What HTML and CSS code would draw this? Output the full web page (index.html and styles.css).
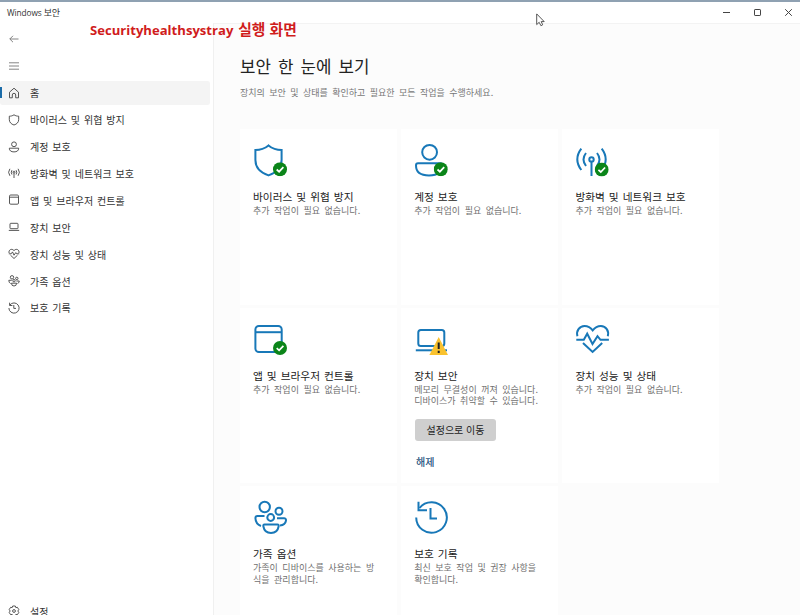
FILE: index.html
```
<!DOCTYPE html>
<html lang="ko">
<head>
    <meta charset="UTF-8">
    <meta name="viewport" content="width=device-width, initial-scale=1.0">
    <title>Windows 보안</title>
    <link rel="stylesheet" href="styles.css">
</head>
<body>
    <svg class="defs" width="0" height="0">
        <symbol id="check" viewBox="0 0 14 14">
            <circle cx="7" cy="7" r="7" fill="#0b8519" stroke="none"/>
            <path d="M3.7 7.2 L6.1 9.4 L10.4 4.9" fill="none" stroke="#fff" stroke-width="1.7"/>
        </symbol>
    </svg>
    <div class="window">
        <header class="titlebar">
            <span class="title">Windows <span class="title-ko">보안</span></span>
            <div class="controls">
                <svg width="9" height="9"><path d="M1 4.5H8"/></svg>
                <svg width="9" height="9"><rect x="1.5" y="1.5" width="6" height="6" rx="0.6"/></svg>
                <svg width="9" height="9"><path d="M1.2 1.2L7.8 7.8M7.8 1.2L1.2 7.8"/></svg>
            </div>
        </header>
        <div class="main">
            <nav class="sidebar">
                <a class="item"><svg class="dim" viewBox="0 0 12 12"><path d="M10.5 6H1.8M5 2.8L1.8 6L5 9.2"/></svg></a>
                <a class="item"><svg class="dim" viewBox="0 0 12 12"><path d="M1 2.8H11M1 6H11M1 9.2H11"/></svg></a>
                <a class="item active"><svg viewBox="0 0 12 12"><path d="M1.5 5.2L6 1.2L10.5 5.2V10.8H7.7V8A1.7 1.7 0 0 0 4.3 8V10.8H1.5Z"/></svg>홈</a>
                <a class="item"><svg viewBox="0 0 12 12"><path d="M6 .8C7.5 1.8 9 2.2 10.7 2.2V5.5C10.7 8.3 8.8 10.2 6 11C3.2 10.2 1.3 8.3 1.3 5.5V2.2C3 2.2 4.5 1.8 6 .8Z"/></svg>바이러스 및 위협 방지</a>
                <a class="item"><svg viewBox="0 0 12 12"><circle cx="6" cy="3.3" r="2.4"/><path d="M1.3 7.2H10.7C10.7 9.7 8.9 10.9 6 10.9S1.3 9.7 1.3 7.2Z"/></svg>계정 보호</a>
                <a class="item"><svg viewBox="0 0 12 12"><circle cx="6" cy="5.2" r="1"/><path d="M6 6.2V11M3.9 3.2Q2.6 5.3 3.9 7.5M8.1 3.2Q9.4 5.3 8.1 7.5M1.9 1.8Q-.7 5.3 1.9 8.8M10.1 1.8Q12.7 5.3 10.1 8.8"/></svg>방화벽 및 네트워크 보호</a>
                <a class="item"><svg viewBox="0 0 12 12"><rect x="1.5" y="1" width="9" height="9.2" rx="1.2"/><path d="M1.5 3.2H10.5"/></svg>앱 및 브라우저 컨트롤</a>
                <a class="item"><svg viewBox="0 0 12 12"><rect x="2" y="2.3" width="8" height="5.4" rx=".8"/><path d="M.8 9.4H11.2"/></svg>장치 보안</a>
                <a class="item"><svg viewBox="0 0 12 12"><path d="M1.1 5C.2 2 3.8-.2 6 2.7C8.2-.2 11.8 2 10.9 5M.8 5.8H3.2L4.5 3.9L6 7.2L7.8 4.6L8.8 5.8H11.2M2.5 7.2L6 10.5L9.5 7.2"/></svg>장치 성능 및 상태</a>
                <a class="item"><svg viewBox="0 0 12 12"><circle cx="4" cy="2.3" r="1.7"/><circle cx="8.8" cy="3.4" r="1.2"/><circle cx="6" cy="5.7" r="1.2"/><path d="M3.8 5.3H.8Q.7 7.7 2.7 8.6M8.3 6H11.3Q11.2 8 9.5 8.5M3.5 8.2H8.6Q8.6 11 6 11T3.5 8.2Z"/></svg>가족 옵션</a>
                <a class="item"><svg viewBox="0 0 12 12"><path d="M.9 6A5.1 5.1 0 1 0 1.9 3M1.6 .7V3.5H4.4M5.8 3V6.4H8"/></svg>보호 기록</a>
                <a class="item settings"><svg viewBox="0 0 12 12"><path d="M4.7 1H7.3L7.8 2.6L9.4 2.3L10.8 4.6L9.8 6L10.8 7.4L9.4 9.7L7.8 9.4L7.3 11H4.7L4.2 9.4L2.6 9.7L1.2 7.4L2.2 6L1.2 4.6L2.6 2.3L4.2 2.6Z"/><circle cx="6" cy="6" r="1.4"/></svg>설정</a>
            </nav>
            <main class="content">
                <h1>보안 한 눈에 보기</h1>
                <p class="subtitle">장치의 보안 및 상태를 확인하고 필요한 모든 작업을 수행하세요.</p>
                <div class="cards">
                    <section class="card">
                        <svg class="icon" viewBox="0 0 36 36">
                            <path d="M15.5 2.4C19 5.3 23.5 7 28.6 7V17C28.6 24.5 24 29.5 15.5 32.4C7 29.5 2.4 24.5 2.4 17V7C7.5 7 12 5.3 15.5 2.4Z"/>
                            <use href="#check" x="20" y="19.3" width="14" height="14"/>
                        </svg>
                        <h2>바이러스 및 위협 방지</h2>
                        <p>추가 작업이 필요 없습니다.</p>
                    </section>
                    <section class="card">
                        <svg class="icon" viewBox="0 0 36 36">
                            <circle cx="15.6" cy="9.3" r="7.4"/>
                            <path d="M4 20.2H26.5Q28.5 20.2 28.5 22.5C28.5 29.5 23 32.4 15 32.4S2 29.5 2 22.5Q2 20.2 4 20.2Z"/>
                            <use href="#check" x="19.8" y="19.3" width="14" height="14"/>
                        </svg>
                        <h2>계정 보호</h2>
                        <p>추가 작업이 필요 없습니다.</p>
                    </section>
                    <section class="card">
                        <svg class="icon" viewBox="0 0 36 36">
                            <circle cx="16.5" cy="16.4" r="2.2"/>
                            <path d="M16.5 18.6V33M11 10Q6 16.4 11 23M22 10Q27 16.4 22 23M6.3 5.7Q-1.7 16.4 6.3 27M26.7 5.7Q34.7 16.4 26.7 27"/>
                            <use href="#check" x="19.7" y="19.6" width="14" height="14"/>
                        </svg>
                        <h2>방화벽 및 네트워크 보호</h2>
                        <p>추가 작업이 필요 없습니다.</p>
                    </section>
                    <section class="card">
                        <svg class="icon" viewBox="0 0 36 36">
                            <rect x="2.4" y="4" width="26.3" height="26" rx="3.5"/>
                            <path d="M2.4 10.2H28.7"/>
                            <use href="#check" x="20" y="19" width="14" height="14"/>
                        </svg>
                        <h2>앱 및 브라우저 컨트롤</h2>
                        <p>추가 작업이 필요 없습니다.</p>
                    </section>
                    <section class="card">
                        <svg class="icon" viewBox="0 0 36 36">
                            <rect x="4.3" y="8" width="26" height="16" rx="2.5"/>
                            <path d="M1.8 28.3H33"/>
                            <path class="warning" d="M24.7 15L34 33H15.4Z"/>
                            <path class="mark" d="M24.7 20.5V27M24.7 28.8V31"/>
                        </svg>
                        <h2>장치 보안</h2>
                        <p>메모리 무결성이 꺼져 있습니다.<br>디바이스가 취약할 수 있습니다.</p>
                        <button class="go">설정으로 이동</button>
                        <a class="dismiss">해제</a>
                    </section>
                    <section class="card">
                        <svg class="icon" viewBox="0 0 36 36">
                            <path d="M2.4 14.3C.9 9 4.5 4 9.5 4C13.5 4 16 6 17.7 8.3C19.5 6 22 4 25.9 4C30.9 4 34.3 9 32.8 14.3"/>
                            <path d="M1.3 17.8H8.8L12.2 11.7L17.5 22L22.5 14.2L25.5 17.8H33.9M8 21L17.6 30L27.2 21"/>
                        </svg>
                        <h2>장치 성능 및 상태</h2>
                        <p>추가 작업이 필요 없습니다.</p>
                    </section>
                    <section class="card">
                        <svg class="icon" viewBox="0 0 36 36">
                            <circle cx="11.7" cy="7" r="5.2"/>
                            <circle cx="26" cy="11.3" r="3.5"/>
                            <circle cx="17.7" cy="17.5" r="3.4"/>
                            <path d="M11.5 16H4.5Q2.4 16 2.4 18Q2.6 24 8 26M24 18.3H31Q33.2 18.3 33 20.5Q32.3 25 27 25.5M11.5 24.5H24.5Q26 24.5 25.6 26.5C24.8 31 22 33 18 33S11.2 31 10.4 26.5Q10 24.5 11.5 24.5Z"/>
                        </svg>
                        <h2>가족 옵션</h2>
                        <p>가족이 디바이스를 사용하는 방<br>식을 관리합니다.</p>
                    </section>
                    <section class="card">
                        <svg class="icon" viewBox="0 0 36 36">
                            <path d="M2.2 17.5A15.3 15.3 0 1 0 5.5 8"/>
                            <path d="M4.5 1.7V10.3H13M16.5 8V18.4H23"/>
                        </svg>
                        <h2>보호 기록</h2>
                        <p>최신 보호 작업 및 권장 사항을<br>확인합니다.</p>
                    </section>
                </div>
            </main>
        </div>
        <div class="caption">Securityhealthsystray <span class="caption-ko">실행 화면</span></div>
        <svg class="cursor" viewBox="0 0 9 14"><path d="M.7 .9V11.6L3.2 9.3L4.9 12.7L6.7 11.8L5.2 8.6H8.2Z"/></svg>
    </div>
</body>
</html>
```
FILE: styles.css
```
* {
    box-sizing: border-box;
}
body {
    margin: 0;
    font-family: "Noto Sans CJK KR", sans-serif;
    font-size: 10px;
    color: #333;
}
h1, h2, p {
    margin: 0;
    font-weight: 400;
    white-space: nowrap;
}
.defs {
    position: absolute;
}
.window {
    position: relative;
    display: flex;
    flex-direction: column;
    height: 615px;
    overflow: hidden;
    border-top: 2px solid #8fa1b2;
    background-color: #fff;
}
.titlebar {
    display: flex;
    justify-content: space-between;
    align-items: center;
    height: 21px;
    flex: none;
    padding: 0 7px;
}
.title {
    font-family: "Open Sans", "Noto Sans CJK KR", sans-serif;
    font-size: 8.3px;
    line-height: 12px;
    letter-spacing: -0.1px;
}
.title-ko {
    font-size: 9px;
}
.controls {
    display: flex;
    gap: 22px;
}
.controls svg {
    fill: none;
    stroke: #444;
}
.main {
    display: flex;
    flex: 1;
    min-height: 0;
}
.sidebar {
    display: flex;
    flex-direction: column;
    gap: 2.9px;
    width: 213px;
    padding: 4px 3px 0 0;
    flex: none;
}
.item {
    display: flex;
    align-items: center;
    gap: 10px;
    height: 24px;
    flex: none;
    padding: 1px 0 0 8px;
    line-height: 14px;
    letter-spacing: 0.05px;
    word-spacing: 1px;
}
.item svg {
    width: 12px;
    height: 12px;
    margin-top: -1px;
    fill: none;
    stroke: #444;
    stroke-width: 0.9;
}
.item .dim {
    stroke: #777;
}
.active {
    background: linear-gradient(#1a6ba8, #1a6ba8) 0 6px / 2px 11px no-repeat #f4f4f4;
    border-radius: 3px;
}
.settings {
    margin-top: auto;
    margin-bottom: -8px;
}
.content {
    flex: 1;
    padding: 32px 0 0 26px;
    border-left: 1px solid #f0f0f0;
    border-top: 1px solid #f3f3f3;
    background-color: #fcfcfc;
}
h1 {
    font-size: 16.8px;
    line-height: 20px;
    color: #222;
    word-spacing: 2.4px;
}
.subtitle {
    margin-top: 11px;
    font-size: 9px;
    line-height: 12px;
    color: #777;
    word-spacing: 1.9px;
}
.cards {
    display: grid;
    grid-template-columns: repeat(3, 157px);
    grid-auto-rows: 175.5px;
    gap: 3px 4.2px;
    margin-top: 30px;
}
.card {
    display: flex;
    flex-direction: column;
    align-items: flex-start;
    padding: 14px 13px 0;
    background-color: #fff;
}
.icon {
    width: 36px;
    height: 36px;
    fill: none;
    stroke: #1878b8;
    stroke-width: 2;
}
.icon .warning {
    fill: #f9c22e;
    stroke: none;
}
.icon .mark {
    stroke: #222;
}
.card h2 {
    margin-top: 11px;
    font-size: 10.7px;
    line-height: 14px;
    color: #222;
    word-spacing: 1px;
}
.card p {
    margin-top: 1px;
    font-size: 9px;
    line-height: 11.5px;
    color: #707070;
    word-spacing: 2px;
}
.go {
    width: 81px;
    height: 22px;
    margin: 12px 0 0 0.8px;
    padding: 0;
    border: none;
    border-radius: 3px;
    background-color: #cfcfcf;
    font-family: inherit;
    font-size: 10px;
    line-height: 14px;
    color: #222;
}
.dismiss {
    margin: 14px 0 0 1.8px;
    font-size: 10px;
    line-height: 14px;
    font-weight: 500;
    color: #1f5480;
}
.caption {
    position: absolute;
    left: 90px;
    top: 17px;
    font-family: "Open Sans", sans-serif;
    font-size: 13.1px;
    font-weight: 700;
    line-height: 20px;
    color: #d01c1c;
    white-space: nowrap;
}
.caption-ko {
    margin-left: 1.5px;
    font-family: "Noto Sans CJK KR", sans-serif;
    font-size: 14.8px;
}
.cursor {
    position: absolute;
    left: 536px;
    top: 11px;
    width: 9px;
    height: 14px;
    fill: #fff;
    stroke: #444;
    stroke-width: 0.9;
}
```
